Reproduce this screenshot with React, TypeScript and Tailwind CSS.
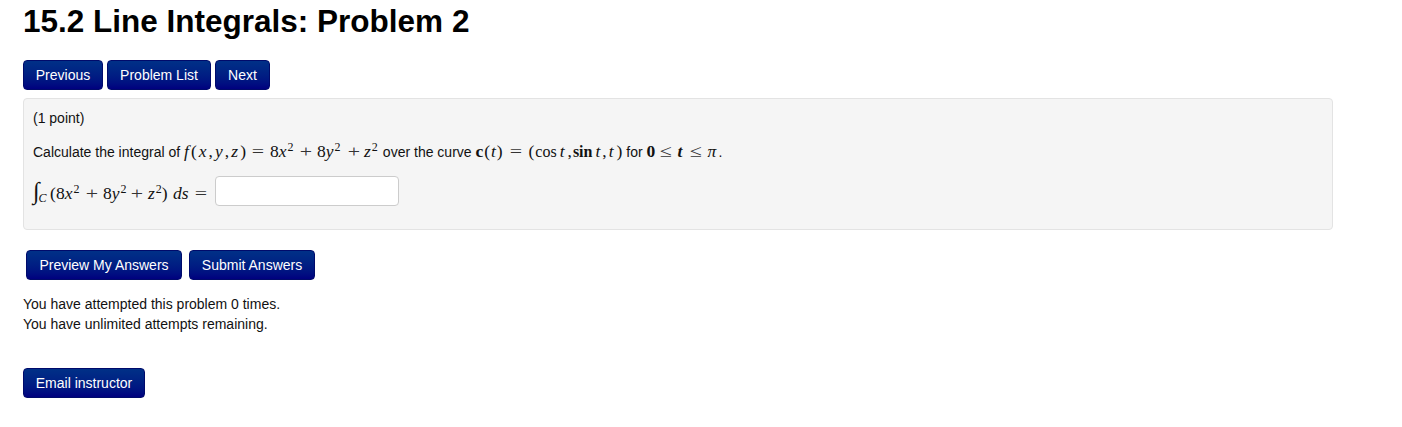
import type { ReactNode } from "react";

const navy = "inline-flex items-center justify-center h-[30px] rounded-[4px] border border-[#000a6b] bg-gradient-to-b from-[#003087] to-[#00007f] text-white text-[14px] leading-none";

function V({ children, bold = false }: { children: ReactNode; bold?: boolean }) {
  return <i className={bold ? "font-bold" : ""}>{children}</i>;
}
function Sup({ children }: { children: ReactNode }) {
  return <span className="ml-[1px] -translate-y-[6px] text-[12px] leading-none">{children}</span>;
}
function W({ children, className = "" }: { children: ReactNode; className?: string }) {
  return <span className={`inline-flex shrink-0 items-baseline ${className}`}>{children}</span>;
}
function Math({ children }: { children: ReactNode }) {
  return <span className="inline-flex items-baseline font-['Liberation_Serif',serif] text-[17.5px] leading-none text-[#111]">{children}</span>;
}
function Sq({ v, className }: { v: ReactNode; className: string }) {
  return <W className={className}>{v}<Sup>2</Sup></W>;
}
function Op({ children, className }: { children: ReactNode; className: string }) {
  return <W className={`justify-center text-[#333] ${className}`}><span className="scale-x-125">{children}</span></W>;
}

export default function App() {
  return (
    <div className="min-h-[427px] bg-white px-[23px] pt-0 font-['Liberation_Sans',Arial,sans-serif] text-[14px] leading-[20px] text-[#111]">
      <h1 className="text-[31.5px] leading-[43px] font-bold text-black">15.2 Line Integrals: Problem 2</h1>
      <div className="mt-[17px] flex gap-[4px]">
        <button className={`${navy} w-[80px]`}>Previous</button>
        <button className={`${navy} w-[104px]`}>Problem List</button>
        <button className={`${navy} w-[55px]`}>Next</button>
      </div>
      <div className="mt-[8px] h-[132px] w-[1310px] rounded-[4px] border border-[#e3e3e3] bg-[#f5f5f5] pl-[9px] pt-[9px]">
        <p className="text-[14px] leading-[20px]">(1 point)</p>
        <p className="mt-[14px] flex h-[20px] items-baseline whitespace-pre">
          <span>Calculate the integral of </span>
          <Math>
            <W className="w-[62px] justify-between"><V>f</V><span>(</span><V>x</V><span>,</span><V>y</V><span>,</span><V>z</V><span>)</span></W>
            <Op className="w-[24px]">=</Op>
            <Sq v={<span>8<V>x</V></span>} className="w-[25px]" />
            <Op className="w-[22px]">+</Op>
            <Sq v={<span>8<V>y</V></span>} className="w-[26px]" />
            <Op className="w-[21px]">+</Op>
            <Sq v={<V>z</V>} className="w-[14px]" />
          </Math>
          <span className="ml-[1px]"> over the curve </span>
          <Math>
            <W className="w-[27px] justify-between"><b>c</b><span>(</span><V>t</V><span>)</span></W>
            <Op className="w-[26px]">=</Op>
            <W className="w-[94px]">
              <span>(</span>
              <span className="ml-[1px] text-[16px]">cos</span>
              <span className="ml-[3px]"><V>t</V></span>
              <span className="ml-[3px]">,</span>
              <b className="ml-[1px] text-[16px]">sin</b>
              <span className="ml-[3px]"><V>t</V></span>
              <span className="ml-[2px]">,</span>
              <span className="ml-[2px]"><V>t</V></span>
              <span className="ml-[3px]">)</span>
            </W>
          </Math>
          <span> for </span>
          <Math>
            <W className="w-[8px]"><b>0</b></W>
            <Op className="w-[23px]">≤</Op>
            <W className="w-[6px]"><V bold>t</V></W>
            <Op className="w-[24px]">≤</Op>
            <W className="w-[9px]"><V>π</V></W>
          </Math>
          <span className="ml-[2px]">.</span>
        </p>
        <div className="mt-[14px] flex h-[30px] items-center whitespace-pre">
          <Math>
            <W className="w-[17px]"><i className="text-[24px] leading-none">∫</i><i className="-ml-[1px] translate-y-[3px] text-[12px]">C</i></W>
            <W className="w-[6px]">(</W>
            <Sq v={<span>8<V>x</V></span>} className="w-[25px]" />
            <Op className="w-[22px]">+</Op>
            <Sq v={<span>8<V>y</V></span>} className="w-[23px]" />
            <Op className="w-[22px]">+</Op>
            <W className="w-[20px]"><V>z</V><Sup>2</Sup><span>)</span></W>
            <W className="ml-[5px] w-[17px]"><V>ds</V></W>
            <Op className="ml-[3px] w-[16px]">=</Op>
          </Math>
          <input type="text" aria-label="answer" className="ml-[6px] h-[30px] w-[184px] rounded-[4px] border border-[#ccc] bg-white" />
        </div>
      </div>
      <div className="mt-[20px] flex gap-[7px] pl-[3px]">
        <button className={`${navy} w-[156px]`}>Preview My Answers</button>
        <button className={`${navy} w-[126px]`}>Submit Answers</button>
      </div>
      <div className="mt-[14px]">
        <p>You have attempted this problem 0 times.</p>
        <p>You have unlimited attempts remaining.</p>
      </div>
      <button className={`${navy} mt-[34px] w-[122px]`}>Email instructor</button>
    </div>
  );
}
